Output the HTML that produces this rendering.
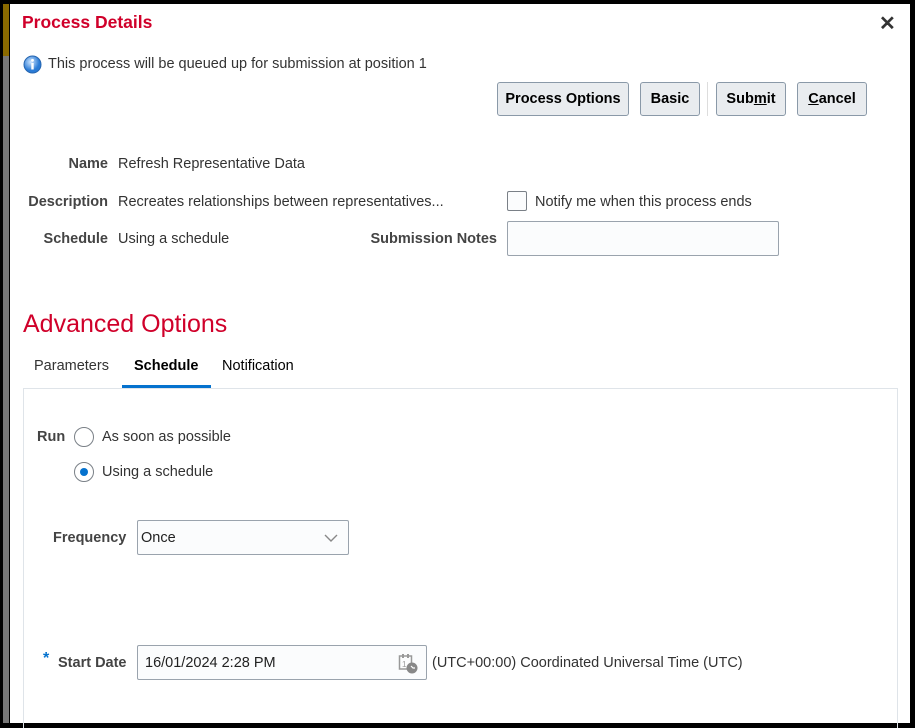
<!DOCTYPE html>
<html><head><meta charset="utf-8"><style>
*{box-sizing:border-box;margin:0;padding:0}
body{width:915px;height:728px;background:#000;position:relative;overflow:hidden;font-family:"Liberation Sans",Arial,sans-serif;font-size:14.5px;color:#333}
.a{position:absolute;white-space:nowrap}
#win{position:absolute;left:10px;top:4px;width:900px;height:719px;background:#fff}
.strip1{position:absolute;left:3px;top:4px;width:6px;height:52px;background:#8a6a00}
.strip2{position:absolute;left:3px;top:56px;width:6px;height:667px;background:#777}
.btn{position:absolute;top:82px;height:34px;border:1px solid #8a99a8;border-radius:3px;background:#e9ecef;font-weight:bold;color:#000;font-size:14.5px;text-align:center;line-height:32px}
.lbl{font-weight:bold;color:#444;text-align:right}
.inp{position:absolute;border:1px solid #9aa3ad;border-radius:2px;background:#fbfcfd}
.radio{position:absolute;width:20px;height:20px;border:1px solid #7a8087;border-radius:50%;background:#fff}
</style></head><body>
<div class="strip1"></div><div class="strip2"></div>
<div id="win"></div>
<div class="a" style="left:22px;top:12px;font-size:17.5px;font-weight:bold;color:#d0002a">Process Details</div>
<div class="a" style="left:879px;top:11px;font-size:20px;font-weight:bold;color:#333">✕</div>
<svg class="a" style="left:23px;top:55px" width="19" height="19" viewBox="0 0 19 19"><defs><radialGradient id="g" cx="40%" cy="35%"><stop offset="0" stop-color="#cfe6ff"/><stop offset="1" stop-color="#2a7bd6"/></radialGradient></defs><circle cx="9.5" cy="9.5" r="8.5" fill="url(#g)" stroke="#2766b0"/><rect x="8.3" y="8" width="2.4" height="6.5" fill="#fff"/><circle cx="9.5" cy="5.3" r="1.4" fill="#fff"/></svg>
<div class="a" style="left:48px;top:56px;font-size:14.5px;color:#333">This process will be queued up for submission at position 1</div>
<div class="btn" style="left:497px;width:132px">Process Options</div>
<div class="btn" style="left:640px;width:60px">Basic</div>
<div class="a" style="left:707px;top:82px;width:1px;height:34px;background:#ddd"></div>
<div class="btn" style="left:716px;width:70px">Sub<u>m</u>it</div>
<div class="btn" style="left:797px;width:70px"><u>C</u>ancel</div>

<div class="a lbl" style="left:20px;width:88px;top:156px">Name</div>
<div class="a" style="left:118px;top:156px">Refresh Representative Data</div>
<div class="a lbl" style="left:20px;width:88px;top:194px">Description</div>
<div class="a" style="left:118px;top:194px">Recreates relationships between representatives...</div>
<div class="a lbl" style="left:20px;width:88px;top:231px">Schedule</div>
<div class="a" style="left:118px;top:231px">Using a schedule</div>
<div class="inp" style="left:507px;top:191px;width:20px;height:20px;border-color:#7a8087"></div>
<div class="a" style="left:535px;top:194px">Notify me when this process ends</div>
<div class="a lbl" style="left:360px;width:137px;top:231px">Submission Notes</div>
<div class="inp" style="left:507px;top:221px;width:272px;height:35px;border-radius:2px"></div>

<div class="a" style="left:23px;top:310px;font-size:25px;color:#d0002a">Advanced Options</div>
<div class="a" style="left:34px;top:358px">Parameters</div>
<div class="a" style="left:134px;top:358px;font-weight:bold;color:#000">Schedule</div>
<div class="a" style="left:222px;top:358px;color:#000">Notification</div>
<div class="a" style="left:122px;top:385px;width:89px;height:3px;background:#0572ce"></div>
<div class="a" style="left:23px;top:388px;width:875px;height:340px;border:1px solid #dfe4e9;border-bottom:none"></div>

<div class="a lbl" style="left:37px;top:429px">Run</div>
<div class="radio" style="left:74px;top:427px"></div>
<div class="a" style="left:102px;top:429px">As soon as possible</div>
<div class="radio" style="left:74px;top:462px"><div style="position:absolute;left:5px;top:5px;width:8px;height:8px;border-radius:50%;background:#0572ce"></div></div>
<div class="a" style="left:102px;top:464px">Using a schedule</div>

<div class="a lbl" style="left:53px;top:530px">Frequency</div>
<div class="inp" style="left:137px;top:520px;width:212px;height:35px"></div>
<div class="a" style="left:141px;top:530px;color:#222">Once</div>
<svg class="a" style="left:324px;top:533px" width="14" height="10"><path d="M1 2 L7 8 L13 2" fill="none" stroke="#888" stroke-width="1.4"/></svg>

<div class="a" style="left:43px;top:650px;color:#0572ce;font-weight:bold;font-size:16px">*</div>
<div class="a lbl" style="left:58px;top:655px">Start Date</div>
<div class="inp" style="left:137px;top:645px;width:290px;height:35px"></div>
<div class="a" style="left:145px;top:655px;color:#222">16/01/2024 2:28 PM</div>
<svg class="a" style="left:398px;top:653px" width="22" height="22" viewBox="0 0 22 22"><rect x="1.5" y="3" width="12" height="13" fill="none" stroke="#999" stroke-width="1.5"/><rect x="4" y="1" width="2" height="4" fill="#999"/><rect x="9" y="1" width="2" height="4" fill="#999"/><text x="4" y="14" font-size="8" fill="#999" font-family="Liberation Sans">1</text><circle cx="14" cy="15" r="5.5" fill="#888"/><path d="M13 13 L15 15 L17 15" stroke="#fff" stroke-width="1.2" fill="none"/></svg>
<div class="a" style="left:432px;top:655px">(UTC+00:00) Coordinated Universal Time (UTC)</div>
</body></html>
